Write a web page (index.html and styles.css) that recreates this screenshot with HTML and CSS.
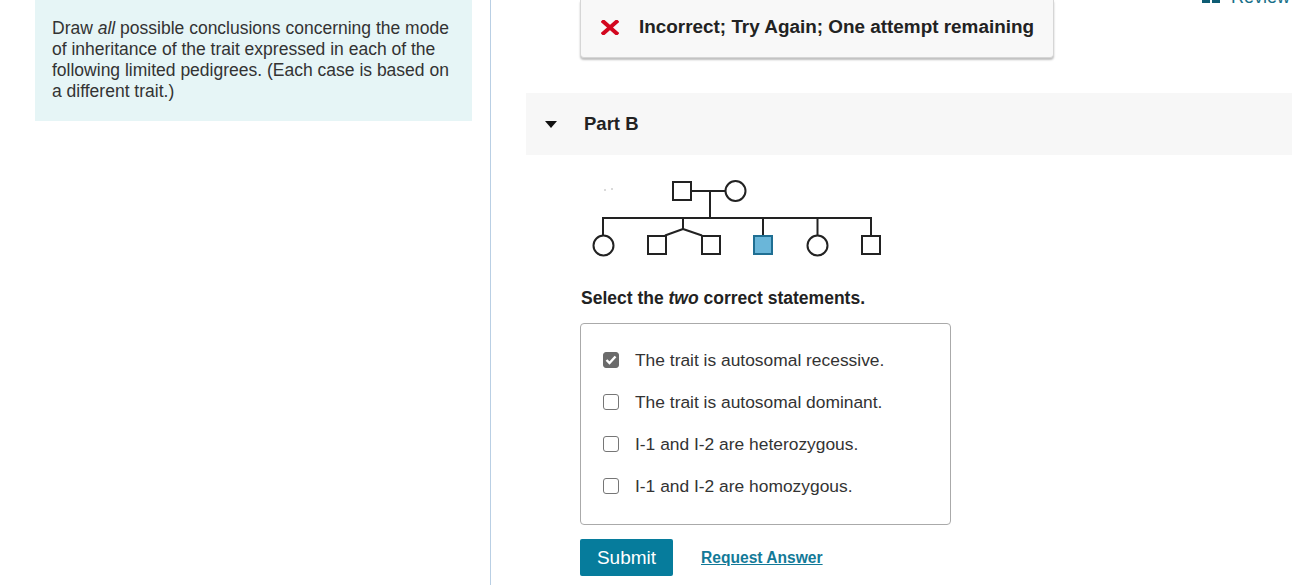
FILE: index.html
```html
<!DOCTYPE html>
<html>
<head>
<meta charset="utf-8">
<link rel="stylesheet" href="styles.css">
</head>
<body>
<div class="page">
  <aside class="left-col">
    <div class="intro">Draw <i>all</i> possible conclusions concerning the mode of inheritance of the trait expressed in each of the following limited pedigrees. (Each case is based on a different trait.)</div>
  </aside>
  <main class="right-col">
    <a class="review" href="#">
      <svg class="review-icon" width="18" height="14" viewBox="0 0 18 14"><path d="M0 0 H8 V14 H0 Z M10 0 H18 V14 H10 Z" fill="#0e5c73"/></svg>
      <span>Review</span>
    </a>
    <div class="feedback">
      <svg class="x-icon" width="18" height="15" viewBox="0 0 18 15"><path d="M2.5 1.8 L15.5 13.2 M15.5 1.8 L2.5 13.2" stroke="#d3071f" stroke-width="4" stroke-linecap="square"/></svg>
      <span class="feedback-text">Incorrect; Try Again; One attempt remaining</span>
    </div>
    <div class="part-header">
      <svg class="caret" width="12" height="7" viewBox="0 0 12 7"><path d="M0 0 H12 L6 7 Z" fill="#111"/></svg>
      <span class="part-title">Part B</span>
    </div>
    <section class="part-body">
      <svg class="pedigree" width="300" height="84" viewBox="0 0 300 84">
        <g fill="none" stroke="#222" stroke-width="2">
          <rect x="84" y="5" width="18" height="18"/>
          <circle cx="146.5" cy="14" r="10"/>
          <line x1="103" y1="14" x2="136.5" y2="14"/>
          <line x1="121" y1="14" x2="121" y2="41"/>
          <line x1="13" y1="41" x2="283" y2="41"/>
          <line x1="14" y1="41" x2="14" y2="58.5"/>
          <circle cx="14.5" cy="68.5" r="10"/>
          <line x1="94" y1="41" x2="94" y2="52"/>
          <line x1="94" y1="52" x2="76" y2="58.5"/>
          <line x1="94" y1="52" x2="113" y2="58.5"/>
          <rect x="59" y="59" width="18" height="18"/>
          <rect x="113" y="59" width="18" height="18"/>
          <line x1="174" y1="41" x2="174" y2="59"/>
          <line x1="228.5" y1="41" x2="228.5" y2="58.5"/>
          <circle cx="228.5" cy="68.5" r="10"/>
          <line x1="282" y1="41" x2="282" y2="59"/>
          <rect x="273" y="59" width="18" height="18"/>
        </g>
        <rect x="165" y="59" width="18" height="18" fill="#6ab6d9" stroke="#1f6f93" stroke-width="2"/>
        <circle cx="16" cy="13" r="0.7" fill="#999"/>
        <circle cx="23" cy="12" r="0.7" fill="#999"/>
      </svg>
      <p class="prompt">Select the <i>two</i> correct statements.</p>
      <div class="choices">
        <label class="choice"><span class="box checked"><svg width="12" height="10" viewBox="0 0 12 10"><path d="M1.5 5 L4.5 8 L10.5 1.5" fill="none" stroke="#fff" stroke-width="2.4"/></svg></span><span>The trait is autosomal recessive.</span></label>
        <label class="choice"><span class="box"></span><span>The trait is autosomal dominant.</span></label>
        <label class="choice"><span class="box"></span><span>I-1 and I-2 are heterozygous.</span></label>
        <label class="choice"><span class="box"></span><span>I-1 and I-2 are homozygous.</span></label>
      </div>
      <div class="actions">
        <button class="submit">Submit</button>
        <a class="request" href="#">Request Answer</a>
      </div>
    </section>
  </main>
</div>
</body>
</html>
```

FILE: styles.css
```css
html, body {
  margin: 0;
  padding: 0;
  background: #fff;
  font-family: "Liberation Sans", Arial, sans-serif;
  color: #333;
}
.page {
  display: flex;
  height: 585px;
  overflow: hidden;
}
.left-col {
  width: 455px;
  padding-left: 35px;
  border-right: 1px solid #b9cfe4;
  flex: none;
}
.intro {
  width: 403px;
  background: #e6f5f6;
  padding: 18px 17px 19px 17px;
  font-size: 17.5px;
  line-height: 21px;
  color: #333;
}
.right-col {
  position: relative;
  flex: 1;
  display: flex;
  flex-direction: column;
}
.review {
  position: absolute;
  top: -13px;
  right: 6px;
  display: flex;
  align-items: center;
  gap: 11px;
  color: #1a7089;
  font-size: 18px;
  text-decoration: none;
}
.review-icon {
  margin-top: -3px;
}
.feedback {
  margin-left: 89px;
  width: 474px;
  height: 58px;
  box-sizing: border-box;
  background: #f8f8f8;
  border: 1px solid #d6d6d6;
  border-top: none;
  border-radius: 0 0 4px 4px;
  box-shadow: 0 2px 2px rgba(0,0,0,0.25);
  display: flex;
  align-items: flex-start;
  padding: 19px 0 0 20px;
}
.x-icon {
  margin-top: 1px;
  flex: none;
}
.feedback-text {
  margin-left: 20px;
  margin-top: -2px;
  font-size: 18.9px;
  line-height: 20px;
  font-weight: bold;
  color: #222;
}
.part-header {
  margin: 35px 4px 0 35px;
  height: 62px;
  background: #f7f7f7;
  display: flex;
  align-items: center;
  padding-left: 19px;
}
.part-title {
  margin-left: 27px;
  font-size: 18.5px;
  font-weight: bold;
  color: #222;
}
.caret {
  margin-top: 1px;
}
.part-body {
  padding-left: 89px;
  display: flex;
  flex-direction: column;
  align-items: flex-start;
}
.pedigree {
  display: block;
  margin: 22px 0 0 9px;
}
.prompt {
  margin: 27px 0 0 1px;
  font-size: 17.5px;
  line-height: 21px;
  font-weight: bold;
  color: #222;
}
.prompt i {
  font-weight: bold;
}
.choices {
  margin-top: 14px;
  border: 1px solid #aaa;
  border-radius: 4px;
  padding: 15px 0 17px 22px;
  box-sizing: border-box;
  width: 371px;
}
.choice {
  display: flex;
  align-items: center;
  height: 42px;
  font-size: 17.4px;
  color: #333;
}
.box {
  width: 16px;
  height: 16px;
  box-sizing: border-box;
  border: 1px solid #767676;
  border-radius: 3px;
  margin-right: 16px;
  flex: none;
  display: flex;
  align-items: center;
  justify-content: center;
  background: #fff;
}
.box.checked {
  background: #6b6b6b;
  border-color: #6b6b6b;
}
.actions {
  margin-top: 14px;
  display: flex;
  align-items: center;
}
.submit {
  width: 93px;
  height: 37px;
  background: #067c9c;
  color: #fff;
  border: none;
  border-radius: 2px;
  font-family: "Liberation Sans", Arial, sans-serif;
  font-size: 19px;
  padding: 0;
}
.request {
  margin-left: 28px;
  color: #137a98;
  font-weight: bold;
  font-size: 15.6px;
  text-decoration: underline;
}
```
